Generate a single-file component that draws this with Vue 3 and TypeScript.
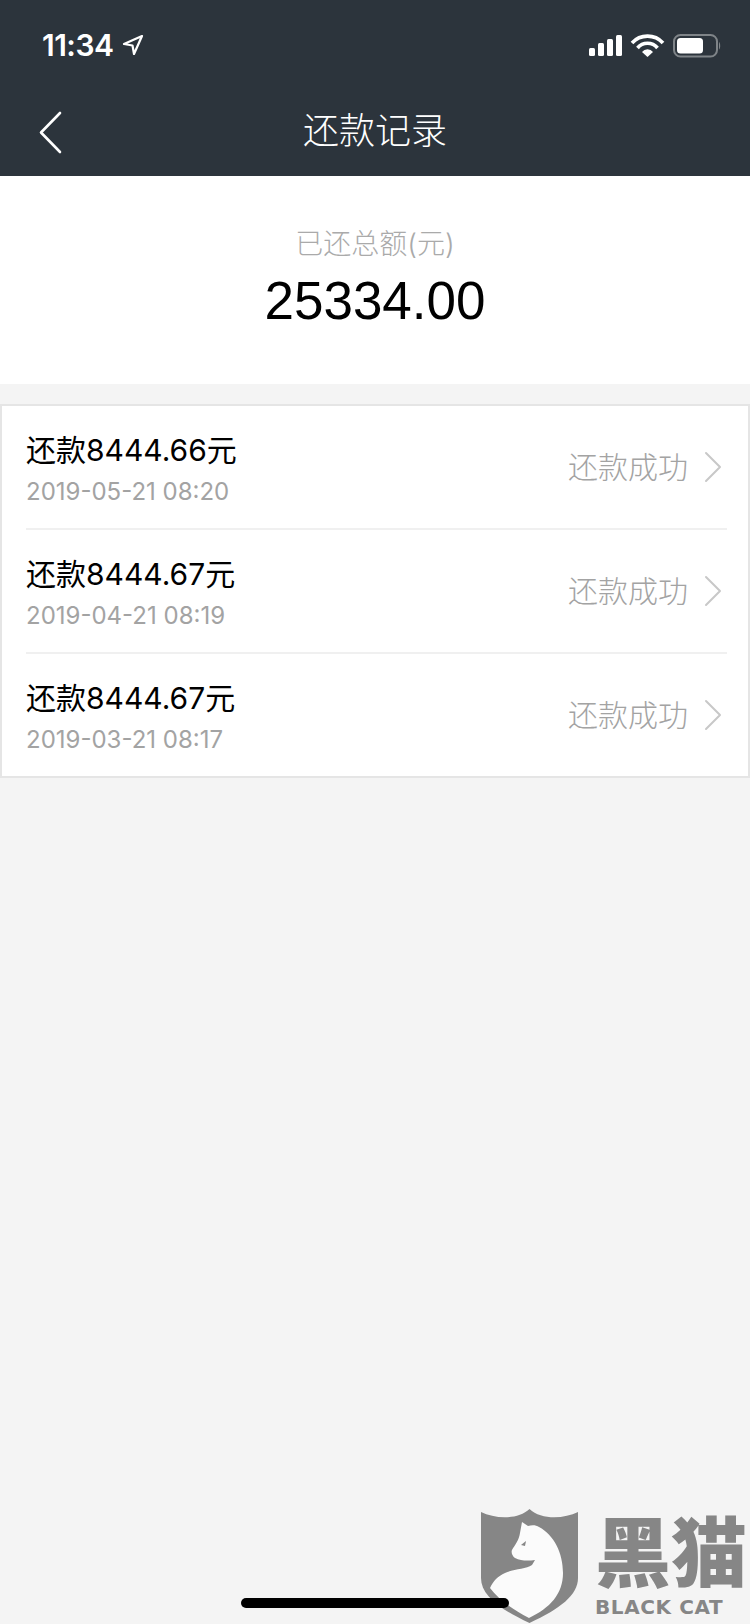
<script setup lang="ts">
interface RepayRecord {
  title: string
  date: string
}

const records: RepayRecord[] = [
  { title: '8444.66', date: '2019-05-21 08:20' },
  { title: '8444.67', date: '2019-04-21 08:19' },
  { title: '8444.67', date: '2019-03-21 08:17' },
]
</script>

<template>
  <div class="page">
    <header class="header">
      <div class="status">
        <div class="status-left">
          <span class="time">11:34</span>
          <svg class="arrow" width="22" height="22" viewBox="0 0 22 22">
            <path d="M20 2 L2 10 L10.5 11.5 L12 20 Z" fill="none" stroke="#fff" stroke-width="2.2" stroke-linejoin="round" />
          </svg>
        </div>
        <svg class="status-icons" width="130" height="24" viewBox="0 0 130 24">
          <rect x="0" y="14" width="6" height="8" rx="1.5" fill="#fff" />
          <rect x="9" y="9" width="6" height="13" rx="1.5" fill="#fff" />
          <rect x="18" y="5" width="6" height="17" rx="1.5" fill="#fff" />
          <rect x="27" y="1" width="6" height="21" rx="1.5" fill="#fff" />
          <path d="M43 9 A21 21 0 0 1 74 9" fill="none" stroke="#fff" stroke-width="3.6" />
          <path d="M48.5 14 A13 13 0 0 1 68.5 14" fill="none" stroke="#fff" stroke-width="3.6" />
          <path d="M53 18 A7 7 0 0 1 64 18 L58.5 23 Z" fill="#fff" />
          <rect x="85" y="1" width="43" height="21.5" rx="6.5" fill="none" stroke="#7f8488" stroke-width="2" />
          <rect x="88" y="4" width="26" height="15.5" rx="3.5" fill="#fff" />
          <path d="M130 8 C131.6 9 131.6 14.5 130 15.5 Z" fill="#7f8488" />
        </svg>
      </div>
      <nav class="nav">
        <svg class="back" width="24" height="44" viewBox="0 0 24 44">
          <path d="M21 2 L2 21.500 L21 41" fill="none" stroke="#fff" stroke-width="2.6" stroke-linecap="round" stroke-linejoin="round" />
        </svg>
        <h1 class="title">还款记录</h1>
      </nav>
    </header>

    <section class="summary">
      <div class="summary-label">已还总额(元)</div>
      <div class="summary-amount">25334.00</div>
    </section>

    <section class="card">
      <div v-for="record in records" :key="record.date" class="row">
        <div class="row-main">
          <div class="row-title">还款{{ record.title }}元</div>
          <div class="row-date">{{ record.date }}</div>
        </div>
        <div class="row-side">
          <span class="row-status">还款成功</span>
          <svg class="chevron" width="18" height="32" viewBox="0 0 18 32">
            <path d="M2 2 L16 16 L2 30" fill="none" stroke="#c8c8c8" stroke-width="2" stroke-linecap="round" stroke-linejoin="round" />
          </svg>
        </div>
      </div>
    </section>

    <div class="watermark">
      <svg class="shield" width="139" height="134" viewBox="0 0 139 134">
        <path d="M21 22 C35 29 58 30 69.500 19 C81 30 104 29 118 22 V88 C118 105 100 119 69.500 133 C39 119 21 105 21 88 Z" fill="#868686" />
        <path d="M62 32 L68 36 C72 35 76 35 79 37 C94 45 103 63 103 83 C103 104 90 118 69 128 C52 119 38 109 30 98 C33 91 38 86 45 83 C54 79 66 79 72 75 L75 70 C68 71 61 71 55 68 C52 66 51 62 52 60 C55 55 59 50 60 43 Z" fill="#fbfbfb" />
        <path d="M61 55 L66 51 L65 56 Z" fill="#868686" />
      </svg>
      <div class="brand">
        <div class="brand-cn">黑猫</div>
        <div class="brand-en">BLACK CAT</div>
      </div>
    </div>
    <div class="home-bar"></div>
  </div>
</template>

<style>
html,
body {
  margin: 0;
  background: #f4f4f4;
}
</style>

<style scoped>
.page {
  position: relative;
  width: 750px;
  height: 1624px;
  overflow: hidden;
  background: #f4f4f4;
  font-family: Inter, "Noto Sans CJK SC", sans-serif;
}

.header {
  height: 176px;
  background: #2c343c;
  color: #fff;
  display: flex;
  flex-direction: column;
}

.status {
  display: flex;
  align-items: flex-start;
  justify-content: space-between;
  height: 88px;
  padding: 33px 31px 0 42px;
  box-sizing: border-box;
}

.status-left {
  display: flex;
  align-items: center;
  gap: 8px;
}

.time {
  font-size: 30px;
  font-weight: 600;
  line-height: 24px;
  letter-spacing: -0.5px;
}

.arrow {
  display: block;
}

.status-icons {
  display: block;
  margin-top: 1px;
  overflow: visible;
}

.nav {
  flex: 1;
  display: flex;
  align-items: center;
  justify-content: center;
  position: relative;
}

.back {
  position: absolute;
  left: 39px;
  top: 23px;
}

.title {
  margin: 0;
  font-size: 36px;
  font-weight: 300;
  line-height: 50px;
  position: relative;
  top: -1px;
}

.summary {
  height: 208px;
  background: #fff;
  box-sizing: border-box;
  padding-top: 48px;
  text-align: center;
}

.summary-label {
  font-size: 28px;
  line-height: 40px;
  color: #aaaaaa;
  font-weight: 300;
}

.summary-amount {
  margin-top: 2px;
  font-family: "Liberation Sans", sans-serif;
  font-size: 53px;
  line-height: 70px;
  color: #000;
}

.card {
  margin-top: 20px;
  background: #fff;
  border: 2px solid #e5e5e5;
}

.row {
  display: flex;
  align-items: center;
  justify-content: space-between;
  height: 124px;
  box-sizing: border-box;
  margin: 0 21px 0 24px;
  border-bottom: 2px solid #f0f0f0;
}

.row:last-child {
  border-bottom: 0;
  height: 122px;
}

.row-main {
  padding-top: 8px;
}

.row-title {
  font-size: 30px;
  line-height: 42px;
  color: #000;
}

.row-date {
  font-size: 24px;
  line-height: 42px;
  color: #a3a3a3;
}

.row-side {
  display: flex;
  align-items: center;
  gap: 16px;
  padding-right: 5px;
}

.row-status {
  font-size: 30px;
  line-height: 42px;
  color: #a3a3a3;
  font-weight: 300;
}

.chevron {
  display: block;
}

.watermark {
  position: absolute;
  left: 460px;
  top: 1490px;
  display: flex;
  width: 290px;
  height: 134px;
}

.shield {
  display: block;
  flex: none;
}

.brand {
  margin-left: -4px;
  color: #868686;
}

.brand-cn {
  margin-top: 21px;
  font-size: 76px;
  font-weight: 900;
  line-height: 84px;
  white-space: nowrap;
}

.brand-en {
  margin-top: 1px;
  font-family: "DejaVu Sans", sans-serif;
  font-size: 20px;
  font-weight: 700;
  line-height: 22px;
  letter-spacing: 0.6px;
  white-space: nowrap;
}

.home-bar {
  position: absolute;
  left: 241px;
  top: 1598px;
  width: 268px;
  height: 10px;
  border-radius: 5px;
  background: #000;
}
</style>
